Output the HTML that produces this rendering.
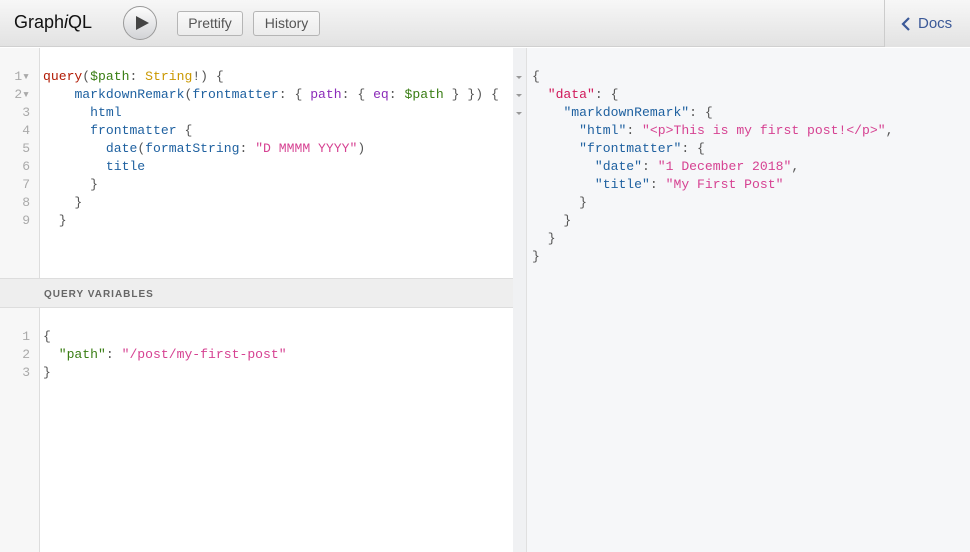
<!DOCTYPE html>
<html><head><meta charset="utf-8"><style>
*{margin:0;padding:0;box-sizing:border-box}
body{width:970px;height:552px;overflow:hidden;background:#fff;font-family:"Liberation Sans",sans-serif;position:relative}
.top{position:absolute;left:0;top:0;width:970px;height:47px;background:linear-gradient(#f7f7f7,#e2e2e2);border-bottom:1px solid #d0d0d0}
.title{position:absolute;left:14px;top:12px;font-size:18px;color:#111}
.run{position:absolute;left:123px;top:6px;width:34px;height:34px;border-radius:50%;background:linear-gradient(#fdfdfd,#d2d3d6);border:1px solid #999}
.run:after{content:"";position:absolute;left:12px;top:9px;border-left:13px solid #444;border-top:7.5px solid transparent;border-bottom:7.5px solid transparent}
.btn{position:absolute;top:11px;height:25px;border:1px solid #b5b5b5;border-radius:3px;background:linear-gradient(#f9f9f9,#ececec);font-size:14px;color:#555;text-align:center;line-height:22px}
.docs{position:absolute;left:884px;top:0;width:86px;height:47px;border-left:1px solid #ccc;background:linear-gradient(#f7f7f7,#e2e2e2);font-size:15px;color:#3b5998}
.gut{position:absolute;left:0;width:40px;background:#f7f7f7;border-right:1px solid #ddd}
.code{position:absolute;font-family:"Liberation Mono",monospace;font-size:13.1px;line-height:18px;white-space:pre}
.ln{position:absolute;left:0;width:30px;text-align:right;font-family:"Liberation Mono",monospace;font-size:13px;line-height:18px;color:#aaa;white-space:pre}
.k{color:#b11a04}.v{color:#397d13}.t{color:#ca9800}.f{color:#1f61a0}.a{color:#8b2bb9}.s{color:#d64292}.p{color:#555}
.qv{position:absolute;left:0;top:278px;width:513px;height:30px;background:#eeeeee;border-top:1px solid #ddd;border-bottom:1px solid #ddd;font-size:10px;letter-spacing:1px;font-weight:bold;color:#666;padding:10px 0 0 44px}
.res{position:absolute;left:513px;top:48px;width:457px;height:504px;background:#f6f7f9;border-left:1px solid #e0e0e0}
.rg{position:absolute;left:513px;top:48px;width:14px;height:504px;background:#f0f1f3;border-right:1px solid #e0e0e0}
.ar{position:absolute;left:516px;width:0;height:0;border-left:3px solid transparent;border-right:3px solid transparent;border-top:3px solid #999}
.rk{color:#1f61a0}.rs{color:#d64292}.rd{color:#d0195a}
</style></head><body>
<div class="top"></div>
<div class="title">Graph<i>i</i>QL</div>
<div class="run"></div>
<div class="btn" style="left:177px;width:66px">Prettify</div>
<div class="btn" style="left:253px;width:67px">History</div>
<div class="docs"><svg style="position:absolute;left:16px;top:16px" width="10" height="16" viewBox="0 0 10 16"><path d="M8 2 L2 8 L8 14" fill="none" stroke="#3b5998" stroke-width="2.2"/></svg><span style="position:absolute;left:33px;top:15px">Docs</span></div>

<div class="gut" style="top:48px;height:230px"></div>
<div class="ln" style="top:68px">1▾
2▾
3
4
5
6
7
8
9</div>
<div class="code" style="left:43px;top:68px"><span class="k">query</span><span class="p">(</span><span class="v">$path</span><span class="p">: </span><span class="t">String</span><span class="p">!) {</span>
    <span class="f">markdownRemark</span><span class="p">(</span><span class="f">frontmatter</span><span class="p">: { </span><span class="a">path</span><span class="p">: { </span><span class="a">eq</span><span class="p">: </span><span class="v">$path</span><span class="p"> } }) {</span>
      <span class="f">html</span>
      <span class="f">frontmatter</span><span class="p"> {</span>
        <span class="f">date</span><span class="p">(</span><span class="f">formatString</span><span class="p">: </span><span class="s">"D MMMM YYYY"</span><span class="p">)</span>
        <span class="f">title</span>
<span class="p">      }
    }
  }</span></div>

<div class="qv">QUERY VARIABLES</div>
<div class="gut" style="top:308px;height:244px"></div>
<div class="ln" style="top:328px">1
2
3</div>
<div class="code" style="left:43px;top:328px"><span class="p">{</span>
  <span class="v">"path"</span><span class="p">: </span><span class="s">"/post/my-first-post"</span>
<span class="p">}</span></div>

<div class="res"></div>
<div class="rg"></div>
<div class="ar" style="top:76px"></div>
<div class="ar" style="top:94px"></div>
<div class="ar" style="top:112px"></div>
<div class="code" style="left:532px;top:68px"><span class="p">{</span>
  <span class="rd">"data"</span><span class="p">: {</span>
    <span class="rk">"markdownRemark"</span><span class="p">: {</span>
      <span class="rk">"html"</span><span class="p">: </span><span class="rs">"&lt;p&gt;This is my first post!&lt;/p&gt;"</span><span class="p">,</span>
      <span class="rk">"frontmatter"</span><span class="p">: {</span>
        <span class="rk">"date"</span><span class="p">: </span><span class="rs">"1 December 2018"</span><span class="p">,</span>
        <span class="rk">"title"</span><span class="p">: </span><span class="rs">"My First Post"</span>
<span class="p">      }
    }
  }
}</span></div>
</body></html>
